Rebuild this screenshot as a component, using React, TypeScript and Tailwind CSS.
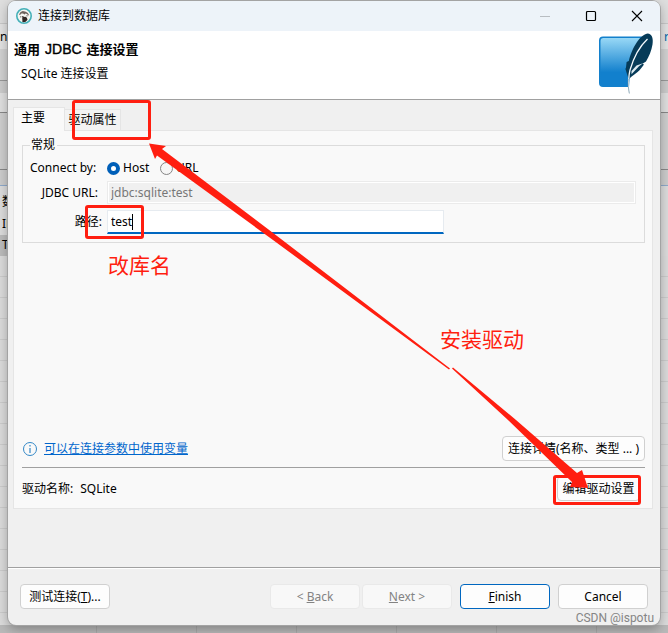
import type { ReactNode } from "react";

type DialogButtonProps = {
  children: ReactNode;
  className?: string;
  disabled?: boolean;
};

function DialogButton({ children, className = "", disabled }: DialogButtonProps) {
  return (
    <button
      type="button"
      disabled={disabled}
      className={`flex h-[25px] items-center justify-center rounded-[4px] border border-[#d0d0d0] bg-[#fdfdfd] whitespace-nowrap text-black disabled:border-[#e9e9e9] disabled:bg-[#f8f8f8] disabled:text-[#838383] ${className}`}
    >
      {children}
    </button>
  );
}

function BeaverLogo() {
  return (
    <svg viewBox="0 0 16 16" className="size-4" aria-hidden="true">
      <circle cx="8" cy="8" r="7.2" fill="#f4f4f1" stroke="#43b0b8" strokeWidth="1.6" />
      <path d="M3 6.600 4.600 4l2.200-.9 3 .6 2 1.200 1.200 2-.8.6-1.200-1.400-1.600-.5-.8.8-1.600-1L5.400 5.400 4 7Z" fill="#6d625d" />
      <path d="M5.800 8.600 7.200 8l.6 1 1.600-.2 1.500 1 .6 2-1.800 1.900-2.200.6-1.600-1.100.8-1.200-.8-1 .7-1Z" fill="#302725" />
      <circle cx="4.800" cy="8.800" r=".6" fill="#3c3330" />
      <circle cx="11" cy="7.800" r=".6" fill="#3c3330" />
    </svg>
  );
}

function SqliteLogo() {
  return (
    <svg viewBox="0 0 56 62" className="h-[62px] w-14 shrink-0" aria-hidden="true">
      <defs>
        <linearGradient id="sheet" x1="0" y1="0" x2="0" y2="1">
          <stop offset="0" stopColor="#98d8f6" />
          <stop offset="0.72" stopColor="#1280cd" />
          <stop offset="1" stopColor="#1280cd" />
        </linearGradient>
      </defs>
      <path d="M5 3.500h41L34 24l-3 30H5a4 4 0 0 1-4-4v-42.500a4 4 0 0 1 4-4Z" fill="#1380cc" />
      <path d="M5.500 5H44L32.500 24 30 52.500H5.500A3 3 0 0 1 2.500 49.500V8a3 3 0 0 1 3-3Z" fill="url(#sheet)" />
      <path d="M49.500 .5c4.500 .3 6 5 5 11-1 6-3.500 12-6.500 17l-3.500 2.200 1.500.8c-3 4.500-6 7.500-9 9.500L33 44l-2.200 2.500L29 41l-1.600-5 .6-1.500.6-5.500 2.200-1C33.500 17 41 2 49.500 .5Z" fill="#063b58" />
      <path d="M49.500 6C42 13 35.500 25 32 37c-1.500 6-1.700 14-1 23" fill="none" stroke="#f4fafd" strokeWidth="1.300" />
      <path d="m33.500 38 5-5.500 6.500-2.300-4 3-7.500 8Z" fill="#dceaf1" />
      <path d="M30.200 46c-.3 5 .2 10 1.200 14.500" fill="none" stroke="#6c8b9d" strokeWidth=".7" />
    </svg>
  );
}

function TitleBar() {
  return (
    <header className="flex h-[30px] shrink-0 items-center rounded-t-[7px] bg-[#edf3f9] pl-2">
      <BeaverLogo />
      <h1 className="ml-1.5 flex-1">连接到数据库</h1>
      <button type="button" aria-label="Minimize" className="flex h-full w-[46px] items-center justify-center text-[#b8bdc2]">
        <svg viewBox="0 0 12 12" className="size-3" stroke="currentColor" shapeRendering="crispEdges"><path d="M1 6.500h10" /></svg>
      </button>
      <button type="button" aria-label="Maximize" className="flex h-full w-[46px] items-center justify-center">
        <svg viewBox="0 0 12 12" className="size-3" fill="none" stroke="currentColor" strokeWidth="1.200"><rect x="1.500" y="1.500" width="9" height="9" rx="1" /></svg>
      </button>
      <button type="button" aria-label="Close" className="flex h-full w-[46px] items-center justify-center">
        <svg viewBox="0 0 12 12" className="size-3" fill="none" stroke="currentColor" strokeWidth="1.100"><path d="m1 1 10 10M11 1 1 11" /></svg>
      </button>
    </header>
  );
}

function Heading() {
  return (
    <section className="flex h-[69px] shrink-0 justify-between border-b border-[#a0a0a0] bg-white pr-1.5 pl-1.5">
      <div className="pt-2">
        <h2 className="flex items-center gap-[5px] text-[13px] leading-5 font-bold">
          <span>通用</span>
          <span className="font-['Liberation_Sans'] text-sm leading-5 font-normal [-webkit-text-stroke:0.4px]">JDBC</span>
          <span>连接设置</span>
        </h2>
        <p className="mt-[7px] pl-[7px] leading-4">SQLite 连接设置</p>
      </div>
      <div className="pt-0.5"><SqliteLogo /></div>
    </section>
  );
}

function Tabs() {
  return (
    <div role="tablist" className="relative z-10 -mb-px flex items-end">
      <button role="tab" aria-selected="true" type="button" className="h-6 w-[52px] border border-b-0 border-[#e5e5e5] bg-[#f9f9f9] pr-3 pb-1">
        主要
      </button>
      <button role="tab" aria-selected="false" type="button" className="h-[22px] w-[56px] border border-l-0 border-[#e5e5e5] bg-[#f3f3f3] whitespace-nowrap">
        驱动属性
      </button>
    </div>
  );
}

function GeneralGroup() {
  return (
    <fieldset className="mt-[5px] h-[107px] min-w-0 border border-[#dcdcdc] pr-2 pl-[7px]">
      <legend className="ml-0 pl-px pr-0.5 leading-[18px]">常规</legend>
      <div role="radiogroup" aria-label="Connect by" className="mt-1 flex h-5 items-center">
        <span className="w-[77px]">Connect by:</span>
        <label className="flex w-[53px] items-center gap-[3px]">
          <input type="radio" name="mode" defaultChecked className="size-[13px] shrink-0 appearance-none rounded-full border-4 border-[#005fb8] bg-white" />
          Host
        </label>
        <label className="flex items-center gap-[3px]">
          <input type="radio" name="mode" className="size-[13px] shrink-0 appearance-none rounded-full border border-[#858585] bg-[#f6f6f6]" />
          URL
        </label>
      </div>
      <div className="mt-[3px] flex items-center">
        <label htmlFor="jdbc-url" className="w-[77px] pr-[9px] text-right">JDBC URL:</label>
        <input id="jdbc-url" readOnly defaultValue="jdbc:sqlite:test" className="h-[23px] min-w-0 flex-1 border border-[#ebebeb] bg-[#f0f0f0] px-[3px] text-[#777777] ring-1 ring-white ring-inset" />
      </div>
      <div className="mt-1.5 flex items-center">
        <label htmlFor="path" className="w-[77px] pr-[5px] text-right">路径:</label>
        <div className="relative w-[337px]">
          <input id="path" defaultValue="test" className="block h-6 w-full border border-b-2 border-[#e6ebf0] border-b-[#0067c0] bg-white px-[3px] outline-none" />
          <span className="absolute top-1 left-[25px] h-4 w-px bg-black" />
        </div>
      </div>
    </fieldset>
  );
}

function Settings() {
  return (
    <main className="flex flex-1 flex-col px-[5px] pt-[7px]">
      <Tabs />
      <div role="tabpanel" className="mr-0.5 flex flex-1 flex-col border border-[#e5e5e5] bg-[#f9f9f9] pr-[7px] pl-2">
        <GeneralGroup />
        <div className="min-h-10 flex-1" />
        <div className="flex items-center">
          <svg viewBox="0 0 16 16" className="size-4 shrink-0" fill="none" stroke="#3388c7" aria-hidden="true">
            <circle cx="8" cy="8" r="6.500" />
            <path d="M8 7v5M8 4v1.500" strokeWidth="1.200" />
          </svg>
          <a href="#variables" className="ml-1.5 text-[#0066cc] underline">可以在连接参数中使用变量</a>
          <DialogButton className="ml-auto w-[143px]">连接详情(名称、类型 ... )</DialogButton>
        </div>
        <div className="mt-1.5 border-t border-[#a0a0a0]" />
        <div className="mt-2 mb-[7px] flex items-center">
          <span>驱动名称:</span>
          <span className="ml-[7px]">SQLite</span>
          <DialogButton className="mr-[5px] ml-auto w-[83px]">编辑驱动设置</DialogButton>
        </div>
      </div>
    </main>
  );
}

function Footer() {
  return (
    <footer className="mt-[58px] flex h-[58px] shrink-0 items-center border-t border-[#a0a0a0] pr-3 pl-3 shadow-[inset_0_1px_0_#ffffff]">
      <DialogButton className="w-[90px]"><span>测试连接(<u>T</u>)...</span></DialogButton>
      <DialogButton disabled className="ml-auto w-[90px]"><span>&lt; <u>B</u>ack</span></DialogButton>
      <DialogButton disabled className="ml-[2px] w-[90px]"><span><u>N</u>ext &gt;</span></DialogButton>
      <DialogButton className="ml-2 w-[90px] border-[#0067c0]!"><span><u>F</u>inish</span></DialogButton>
      <DialogButton className="ml-2 w-[90px]">Cancel</DialogButton>
    </footer>
  );
}

function Workbench() {
  return (
    <div className="absolute inset-0 overflow-hidden bg-[#d7d7d7]" aria-hidden="true">
      <div className="h-6 border-b border-[#c8c8c8] bg-[#dedede]" />
      <div className="flex h-[25px] items-center justify-between overflow-hidden bg-[#e3e3e3]">
        <span>n_</span>
        <span className="w-1 text-[#0067a8]">r</span>
      </div>
      <div className="h-8 border-b border-[#999999] bg-[#d2d2d2]" />
      <div className="h-3 bg-[#cccccc]" />
      <div className="h-5 border-b border-[#888888] bg-[#e0e0e0]" />
      <div className="h-[57px] border-b border-[#888888] bg-[#cfcfcf]" />
      <div className="h-4 border-b border-[#8faacb] bg-[#cdcdcd]" />
      <div className="h-7 bg-[#dddddd] pt-2 pl-0.5">数</div>
      <div className="h-[21px] bg-[#dddddd] pt-0.5 pl-0.5">IN</div>
      <div className="h-[21px] bg-[linear-gradient(to_right,#bcbcbc_0_50%,#dddddd_50%)] pt-0.5 pl-0.5">T</div>
      <div className="h-[378px] bg-[repeating-linear-gradient(to_bottom,#dcdcdc_0_20px,#cccccc_20px_21px)]" />
      <div className="absolute inset-x-0 bottom-0 h-2 bg-[repeating-linear-gradient(to_right,#b9b9b9_0_96px,#aaaaaa_96px_97px,#b9b9b9_97px_100px)]" />
    </div>
  );
}

function Annotations() {
  return (
    <div className="pointer-events-none absolute inset-0 z-20 text-[#ff1e10]">
      <svg viewBox="0 0 668 633" className="absolute top-0 left-0 h-[633px] w-[668px]" fill="currentColor" aria-hidden="true">
        <path d="M149 143.500 166 146l-4 3L281 239 450 368.500l-1 1L273 240 157 155.500 155 159Z" />
        <path d="M453 367.500 516 420l61 53 5-3 6 18-18-1 2-5-64-62-56-51.500Z" />
      </svg>
      <div className="absolute top-[100px] left-[72px] h-10 w-[79px] rounded-[3px] border-3 border-current" />
      <div className="absolute top-[205px] left-[85px] h-[34px] w-[59px] rounded-[3px] border-3 border-current" />
      <div className="absolute top-[475px] left-[553px] h-[30px] w-[88px] rounded-[3px] border-3 border-current" />
      <p className="absolute top-[249px] left-[108px] text-[21px] leading-8">改库名</p>
      <p className="absolute top-[323px] left-[440px] text-[21px] leading-8">安装驱动</p>
      <p className="absolute top-[610px] right-3.5 font-['Roboto'] text-xs text-[#858585]">CSDN @ispotu</p>
    </div>
  );
}

export default function App() {
  return (
    <div className="relative flex min-h-screen flex-col px-2 pt-px pb-2 font-['Noto_Sans','Noto_Sans_CJK_SC',sans-serif] text-xs text-black">
      <Workbench />
      <div role="dialog" aria-label="连接到数据库" className="relative flex flex-1 flex-col rounded-lg bg-[#f0f0f0] shadow-[0_0_0_1px_#a3a3a3,0_4px_12px_#00000050]">
        <TitleBar />
        <Heading />
        <Settings />
        <Footer />
      </div>
      <Annotations />
    </div>
  );
}
